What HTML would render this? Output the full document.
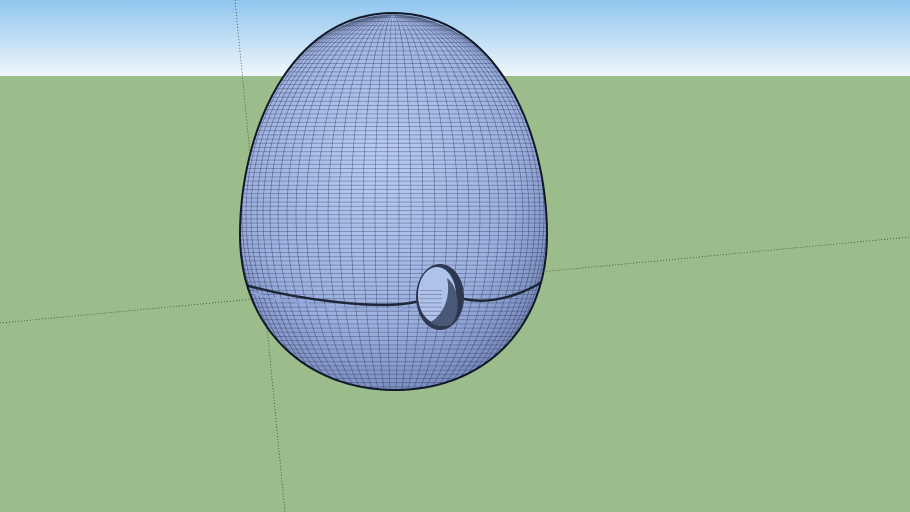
<!DOCTYPE html>
<html><head><meta charset="utf-8"><style>html,body{margin:0;padding:0;width:910px;height:512px;overflow:hidden}</style></head>
<body>
<svg width="910" height="512" viewBox="0 0 910 512" xmlns="http://www.w3.org/2000/svg">
<defs>
<linearGradient id="sky" x1="0" y1="0" x2="0" y2="1">
<stop offset="0" stop-color="#8fc5ee"/><stop offset="1" stop-color="#f0f7fc"/>
</linearGradient>
<radialGradient id="eg" cx="0.45" cy="0.4" r="0.6">
<stop offset="0" stop-color="#b8ccf2"/><stop offset="0.7" stop-color="#9cb0e0"/><stop offset="1" stop-color="#7a8dc0"/>
</radialGradient>
<pattern id="hl" width="10" height="4.2" patternUnits="userSpaceOnUse">
<line x1="0" y1="0.5" x2="10" y2="0.5" stroke="#2a3550" stroke-width="0.6" opacity="0.6"/>
</pattern>
<clipPath id="ec"><path id="egg" d="M393,13 C497,13 547,132 547,235 C547,330 482,390 395,390 C308,390 240,330 240,235 C240,132 290,13 393,13 Z"/></clipPath>
</defs>
<rect width="910" height="76" fill="url(#sky)"/>
<rect y="76" width="910" height="436" fill="#9bbd8b"/>
<line x1="235" y1="0" x2="285" y2="512" stroke="#444" stroke-width="0.8" stroke-dasharray="1,2"/>
<line x1="0" y1="323" x2="910" y2="237" stroke="#444" stroke-width="0.8" stroke-dasharray="1,2"/>
<g clip-path="url(#ec)">
<rect x="230" y="5" width="330" height="390" fill="url(#eg)"/>
<rect x="230" y="5" width="330" height="390" fill="url(#hl)"/>
<g fill="none" stroke="#2a3550" stroke-width="0.6" opacity="0.6">
<ellipse cx="393" cy="215" rx="6" ry="200"/><ellipse cx="393" cy="215" rx="18" ry="200"/>
<ellipse cx="393" cy="215" rx="30" ry="200"/><ellipse cx="393" cy="215" rx="42" ry="200"/>
<ellipse cx="393" cy="215" rx="54" ry="200"/><ellipse cx="393" cy="215" rx="65" ry="200"/>
<ellipse cx="393" cy="215" rx="76" ry="200"/><ellipse cx="393" cy="215" rx="87" ry="200"/>
<ellipse cx="393" cy="215" rx="97" ry="200"/><ellipse cx="393" cy="215" rx="106" ry="200"/>
<ellipse cx="393" cy="215" rx="115" ry="200"/><ellipse cx="393" cy="215" rx="123" ry="200"/>
<ellipse cx="393" cy="215" rx="130" ry="200"/><ellipse cx="393" cy="215" rx="136" ry="200"/>
<ellipse cx="393" cy="215" rx="142" ry="200"/><ellipse cx="393" cy="215" rx="147" ry="200"/>
<ellipse cx="393" cy="215" rx="151" ry="200"/><ellipse cx="393" cy="215" rx="154" ry="200"/>
</g>
<path d="M245,285 C300,300 380,310 415,302 C430,300 450,296 470,300 C500,304 530,290 545,280" fill="none" stroke="#1e2638" stroke-width="2.5"/>
<path d="M248,292 C300,306 380,314 415,308" fill="none" stroke="#8ea2d4" stroke-width="1.5"/>
<ellipse cx="440" cy="297" rx="24" ry="33" fill="#2e3850"/>
<ellipse cx="437" cy="295" rx="19" ry="28" fill="#aec2ea"/>
<path d="M447,278 C458,286 462,310 452,324 C444,328 434,326 430,322 C440,318 452,300 447,278Z" fill="#4a5878"/>
<rect x="420" y="290" width="22" height="28" fill="url(#hl)"/>
</g>
<use href="#egg" fill="none" stroke="#111827" stroke-width="2"/>
</svg>
</body></html>
